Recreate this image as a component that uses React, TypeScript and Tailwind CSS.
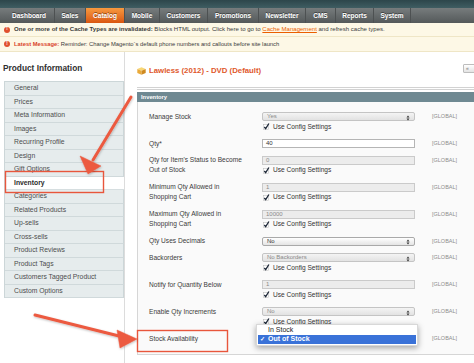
import React from "react";

const navItems: { label: string; w: string; active?: boolean }[] = [
  { label: "Dashboard", w: "w-[51px]" },
  { label: "Sales", w: "w-[31px]" },
  { label: "Catalog", w: "w-[39px]", active: true },
  { label: "Mobile", w: "w-[35px]" },
  { label: "Customers", w: "w-[48px]" },
  { label: "Promotions", w: "w-[51px]" },
  { label: "Newsletter", w: "w-[47px]" },
  { label: "CMS", w: "w-[30px]" },
  { label: "Reports", w: "w-[38px]" },
  { label: "System", w: "w-[37px]" },
];

const tabs = [
  "General",
  "Prices",
  "Meta Information",
  "Images",
  "Recurring Profile",
  "Design",
  "Gift Options",
  "Inventory",
  "Categories",
  "Related Products",
  "Up-sells",
  "Cross-sells",
  "Product Reviews",
  "Product Tags",
  "Customers Tagged Product",
  "Custom Options",
];

function Check() {
  return (
    <svg width="7" height="7" viewBox="0 0 7 7" className="shrink-0">
      <rect x="0.5" y="1.5" width="5" height="5" fill="#fff" stroke="#b5b5b5" strokeWidth="0.5" />
      <path d="M1.3 4 L2.7 5.7 L5.9 0.5" stroke="#1e2838" strokeWidth="1.3" fill="none" />
    </svg>
  );
}

function Stepper() {
  return (
    <svg width="4" height="6" viewBox="0 0 4 6" className="absolute right-[4px] top-[1.5px]">
      <path d="M0.5 2.4 L2 0.6 L3.5 2.4 Z" fill="#333" />
      <path d="M0.5 3.6 L2 5.4 L3.5 3.6 Z" fill="#333" />
    </svg>
  );
}

type Ctl =
  | { kind: "select"; value: string; disabled?: boolean }
  | { kind: "input"; value: string; disabled?: boolean };

function Control({ c }: { c: Ctl }) {
  if (c.kind === "select") {
    return (
      <div
        className={
          "relative h-[9px] w-[153px] rounded-[2px] border text-[6px] leading-[7px] pl-[4px] " +
          (c.disabled
            ? "border-[#c4c4c4] bg-gradient-to-b from-[#f4f4f4] to-[#e2e2e2] text-[#8a8a8a]"
            : "border-[#a9a9a9] bg-gradient-to-b from-[#ffffff] to-[#e4e4e4] text-[#333]")
        }
      >
        {c.value}
        <Stepper />
      </div>
    );
  }
  return (
    <div
      className={
        "h-[9px] w-[153px] border text-[6px] leading-[7px] pl-[3px] " +
        (c.disabled
          ? "border-[#cacaca] bg-[#ececec] text-[#8a8a8a]"
          : "border-[#b5b5b5] bg-white text-[#333]")
      }
    >
      {c.value}
    </div>
  );
}

function UseConfig() {
  return (
    <div className="h-[11px] flex items-center gap-[3px] pl-[1px] text-[6.6px] text-[#333]">
      <Check />
      <span>Use Config Settings</span>
    </div>
  );
}

const rows: { label: string[]; ctl: Ctl; config?: boolean }[] = [
  { label: ["Manage Stock"], ctl: { kind: "select", value: "Yes", disabled: true }, config: true },
  { label: ["Qty*"], ctl: { kind: "input", value: "40" } },
  {
    label: ["Qty for Item's Status to Become", "Out of Stock"],
    ctl: { kind: "input", value: "0", disabled: true },
    config: true,
  },
  {
    label: ["Minimum Qty Allowed in", "Shopping Cart"],
    ctl: { kind: "input", value: "1", disabled: true },
    config: true,
  },
  {
    label: ["Maximum Qty Allowed in", "Shopping Cart"],
    ctl: { kind: "input", value: "10000", disabled: true },
    config: true,
  },
  { label: ["Qty Uses Decimals"], ctl: { kind: "select", value: "No" } },
  { label: ["Backorders"], ctl: { kind: "select", value: "No Backorders", disabled: true }, config: true },
  { label: ["Notify for Quantity Below"], ctl: { kind: "input", value: "1", disabled: true }, config: true },
  { label: ["Enable Qty Increments"], ctl: { kind: "select", value: "No", disabled: true }, config: true },
];

export default function App() {
  return (
    <div className="relative w-[474px] h-[363px] overflow-hidden bg-white font-['Liberation_Sans',Arial,sans-serif]">
      {/* top band */}
      <div className="h-[8px] bg-gradient-to-b from-[#2d464b] to-[#3f5d62]" />
      {/* nav */}
      <nav className="h-[15px] flex pl-[4px] bg-gradient-to-b from-[#777c7d] to-[#54595a]">
        {navItems.map((n) => (
          <div
            key={n.label}
            className={
              n.w +
              " h-full flex items-center justify-center text-[6.5px] font-bold text-white border-r border-[#4d5152] [text-shadow:0_-1px_0_rgba(0,0,0,0.45)] " +
              (n.active ? "bg-gradient-to-b from-[#f7993f] to-[#d9560f]" : "")
            }
          >
            {n.label}
          </div>
        ))}
      </nav>
      {/* messages */}
      <div className="h-[29px] bg-[#fdf8e6] border-b border-[#efe6c6] text-[#3a3a3a]">
        <div className="h-[14px] flex items-center gap-[4px] pl-[4px] border-b border-[#efe6c6] text-[6.05px]">
          <span className="w-[6px] h-[6px] rounded-full bg-[#e0502f] text-white text-[4.5px] font-bold flex items-center justify-center">!</span>
          <span>
            <b>One or more of the Cache Types are invalidated:</b> Blocks HTML output. Click here to go to{" "}
            <span className="text-[#eb5e00] underline">Cache Management</span> and refresh cache types.
          </span>
        </div>
        <div className="h-[14px] flex items-center gap-[4px] pl-[4px] text-[5.8px]">
          <span className="w-[6px] h-[6px] rounded-full bg-[#e0502f] text-white text-[4.5px] font-bold flex items-center justify-center">!</span>
          <span>
            <b className="text-[#d9432a]">Latest Message:</b> Reminder: Change Magento`s default phone numbers and callouts before site launch
          </span>
        </div>
      </div>
      {/* main */}
      <div className="flex">
        {/* sidebar */}
        <div className="w-[124px] shrink-0">
          <div className="h-[29px] flex items-end pb-[7px] pl-[3px] text-[8.3px] font-bold text-[#2f2f2f]">
            Product Information
          </div>
          <div className="ml-[4px] w-[120px] border-l border-t border-[#ccd6d8]">
            {tabs.map((t) =>
              t === "Inventory" ? (
                <div
                  key={t}
                  className="h-[13.5px] flex items-center pl-[9px] text-[6.8px] font-bold text-[#2b2b2b] bg-white border-b border-[#d6dee0]"
                >
                  {t}
                </div>
              ) : (
                <div
                  key={t}
                  className="h-[13.5px] flex items-center pl-[9px] text-[6.8px] text-[#4d4d4d] bg-[#e6eced] border-b border-[#d0d9db] border-r border-r-[#ccd6d8]"
                >
                  {t}
                </div>
              )
            )}
          </div>
        </div>
        {/* content */}
        <div className="flex-1 min-w-0 border-l border-[#dcdcdc] pl-[12px] h-[311px]">
          <div className="h-[35px] flex items-center pt-[3px]">
            <svg width="9" height="8" viewBox="0 0 9 8" className="shrink-0">
              <path d="M4.5 0.3 L8.7 2 L4.5 3.7 L0.3 2 Z" fill="#f8d774" />
              <path d="M0.3 2 L4.5 3.7 L4.5 7.8 L0.3 6 Z" fill="#eaaa3a" />
              <path d="M8.7 2 L4.5 3.7 L4.5 7.8 L8.7 6 Z" fill="#cf8a20" />
            </svg>
            <span className="ml-[3px] text-[7.8px] font-bold text-[#e0582b]">Lawless (2012) - DVD (Default)</span>
            <div className="ml-auto mr-[-4px] mb-[6px] w-[15px] h-[9px] rounded-[1px] border border-[#bdbdbd] bg-gradient-to-b from-white to-[#e3e3e3] text-[5px] leading-[7px] text-[#777] pl-[2px]">
              «
            </div>
          </div>
          <div className="h-[3px] border-t border-b border-[#d2d2d2]" />
          <div className="mt-[2px] h-[10px] bg-[#6f8992] flex items-center pl-[4px] text-[5.8px] font-bold text-white">
            Inventory
          </div>
          <div className="border-l border-b border-[#d6d6d6] bg-[#fafafa] pt-[10px] pl-[11px] pb-[10px]">
            {rows.map((r, i) => (
              <div key={i} className="flex pb-[7px]">
                <div className="w-[113px] shrink-0 -mt-[0.5px] text-[6.6px] leading-[10px] text-[#3a3a3a]">
                  {r.label.map((l) => (
                    <div key={l}>{l}</div>
                  ))}
                </div>
                <div className="w-[153px] shrink-0">
                  <Control c={r.ctl} />
                  {r.config && <UseConfig />}
                </div>
                <div className="ml-[17px] text-[5.5px] leading-[9px] text-[#8d8d8d]">[GLOBAL]</div>
              </div>
            ))}
            {/* Stock Availability */}
            <div className="flex">
              <div className="w-[113px] shrink-0 -mt-[0.5px] text-[6.6px] leading-[10px] text-[#3a3a3a]">
                Stock Availability
              </div>
              <div className="w-[153px] shrink-0 relative">
                <Control c={{ kind: "select", value: "" }} />
                <div className="absolute left-[-6px] top-[-10px] w-[162px] bg-white shadow-[0_2px_6px_rgba(0,0,0,0.35)] border border-[#d8d8d8] pb-[1px]">
                  <div className="h-[10px] flex items-center pl-[11px] text-[7px] text-[#222]">In Stock</div>
                  <div className="h-[9px] mx-[1px] flex items-center bg-[#3a72d8] text-white text-[7px] font-bold">
                    <span className="w-[10px] pl-[2px] text-[6px]">✓</span>
                    <span>Out of Stock</span>
                  </div>
                </div>
              </div>
              <div className="ml-[17px] text-[5.5px] leading-[9px] text-[#8d8d8d]">[GLOBAL]</div>
            </div>
          </div>
        </div>
      </div>
      {/* annotations overlay */}
      <svg
        className="absolute left-0 top-0 pointer-events-none"
        width="474"
        height="363"
        viewBox="0 0 474 363"
      >
        <defs>
          <filter id="sh" x="-20%" y="-20%" width="140%" height="140%">
            <feDropShadow dx="0.5" dy="1" stdDeviation="0.8" floodColor="#000" floodOpacity="0.25" />
          </filter>
        </defs>
        <rect x="5.5" y="171.5" width="98" height="21" fill="none" stroke="#e8563c" strokeWidth="1.4" />
        <rect x="137.5" y="330.5" width="90" height="21" fill="none" stroke="#e8563c" strokeWidth="1.4" />
        <g filter="url(#sh)" fill="#ec5a40" stroke="#ec5a40">
          <line x1="131" y1="97" x2="93" y2="160" strokeWidth="3" strokeLinecap="round" />
          <polygon points="80,156 101,166 88,174" strokeWidth="0.5" />
          <line x1="35" y1="315" x2="119" y2="336" strokeWidth="3" strokeLinecap="round" />
          <polygon points="117,330 120,348 137,339" strokeWidth="0.5" />
        </g>
      </svg>
    </div>
  );
}
